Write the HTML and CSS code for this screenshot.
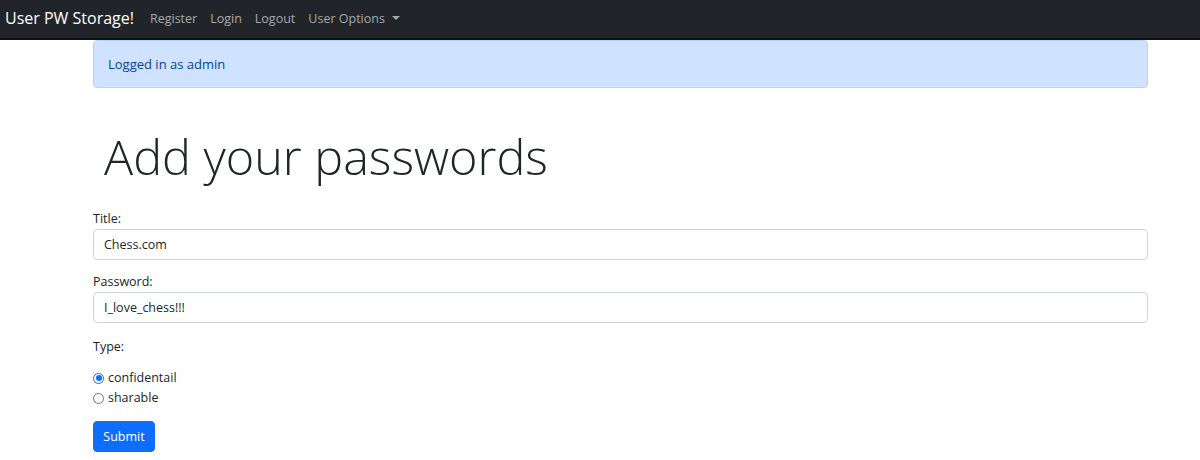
FILE: index.html
```html
<!DOCTYPE html>
<html>
<head>
<meta charset="utf-8">
<link rel="stylesheet" href="styles.css">
</head>
<body>
<nav class="navbar">
  <span class="brand">User PW Storage!</span>
  <ul class="nav">
    <li>Register</li>
    <li>Login</li>
    <li>Logout</li>
    <li class="dropdown">User Options <span class="caret"></span></li>
  </ul>
</nav>
<main class="container">
  <div class="alert">Logged in as admin</div>
  <h1 class="display">Add your passwords</h1>
  <form class="form">
    <label class="label">Title:</label>
    <div class="input">Chess.com</div>
    <label class="label">Password:</label>
    <div class="input">I_love_chess!!!</div>
    <div class="type">Type:</div>
    <div class="radio"><span class="dot checked"></span>confidentail</div>
    <div class="radio"><span class="dot"></span>sharable</div>
    <button class="btn" type="button">Submit</button>
  </form>
</main>
</body>
</html>
```
FILE: styles.css
```css
* { box-sizing: border-box; }
body {
  margin: 0;
  font-family: "Open Sans", "Noto Sans", sans-serif;
  font-size: 12.5px;
  color: #212529;
  background: #fff;
}
.navbar {
  height: 40px;
  background: #212529;
  border-bottom: 2px solid #111;
  display: flex;
  align-items: center;
  padding-left: 5px;
  padding-bottom: 2px;
}
.brand {
  color: #fff;
  font-size: 16px;
  margin-right: 16px;
}
.nav {
  list-style: none;
  display: flex;
  margin: 0;
  padding: 0;
}
.nav li {
  color: rgba(255,255,255,.6);
  font-size: 12.5px;
  margin-right: 13px;
  display: flex;
  align-items: center;
}
.caret {
  display: inline-block;
  margin-left: 7px;
  border-top: 4px solid rgba(255,255,255,.6);
  border-left: 4px solid transparent;
  border-right: 4px solid transparent;
}
.container {
  width: 1055px;
  margin-left: 93px;
}
.alert {
  height: 48px;
  background: #cfe2ff;
  border: 1px solid #b6d4fe;
  border-radius: 4px;
  color: #084298;
  padding-left: 14px;
  display: flex;
  align-items: center;
  font-size: 13px;
}
.display {
  font-weight: 300;
  font-size: 48.5px;
  margin: 28px 0 0 11px;
  line-height: 80px;
  color: #212529;
}
.form {
  margin-top: 14px;
  display: flex;
  flex-direction: column;
  align-items: flex-start;
}
.label { display: block; line-height: 18px; margin-bottom: 1px; }
.input {
  width: 100%;
  height: 31px;
  border: 1px solid #ced4da;
  border-radius: 4px;
  padding-left: 10px;
  display: flex;
  align-items: center;
  margin-bottom: 13px;
}
.type { margin-top: 1px; line-height: 20px; margin-bottom: 11px; }
.radio { display: flex; align-items: center; line-height: 20px; }
.dot {
  width: 11px; height: 11px;
  border: 1px solid #767676;
  border-radius: 50%;
  margin-right: 4px;
  display: inline-block;
  position: relative;
}
.dot.checked { border-color: #0d6efd; }
.dot.checked::after {
  content: "";
  position: absolute;
  left: 1.5px; top: 1.5px;
  width: 6px; height: 6px;
  border-radius: 50%;
  background: #0d6efd;
}
.btn {
  margin-top: 13px;
  background: #0d6efd;
  color: #fff;
  border: 1px solid #0d6efd;
  border-radius: 4px;
  font-family: inherit;
  font-size: 12.5px;
  height: 31px;
  width: 62px;
  padding: 0;
}
```
